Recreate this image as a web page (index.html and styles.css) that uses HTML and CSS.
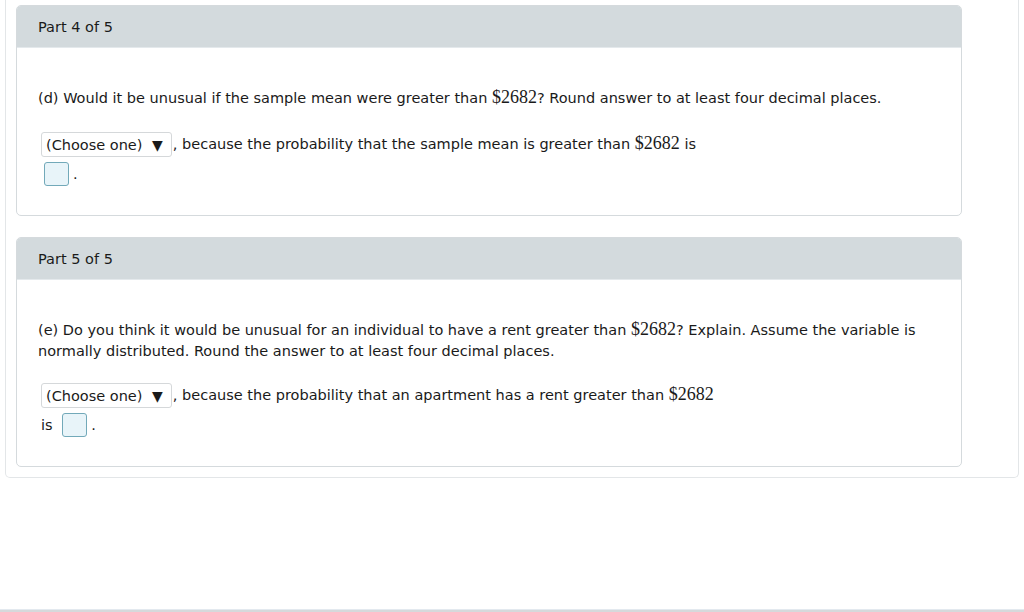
FILE: index.html
```html
<!DOCTYPE html>
<html>
<head>
<meta charset="utf-8">
<link rel="stylesheet" href="styles.css">
</head>
<body>
<div class="outer">
  <div class="card">
    <div class="card-head">Part 4 of 5</div>
    <div class="card-body">
      <p class="question">(d) Would it be unusual if the sample mean were greater than <span class="num">$2682</span>? Round answer to at least four decimal places.</p>
      <div class="answer">
        <span class="select">(Choose one) <span class="arrow">▼</span></span><span class="after">, because the probability that the sample mean is greater than <span class="num">$2682</span> is</span>
      </div>
      <div class="answer-line"><span class="box first"></span>.</div>
    </div>
  </div>
  <div class="card">
    <div class="card-head">Part 5 of 5</div>
    <div class="card-body">
      <p class="question">(e) Do you think it would be unusual for an individual to have a rent greater than <span class="num">$2682</span>? Explain. Assume the variable is normally distributed. Round the answer to at least four decimal places.</p>
      <div class="answer answer-tight">
        <span class="select">(Choose one) <span class="arrow">▼</span></span><span class="after">, because the probability that an apartment has a rent greater than <span class="num">$2682</span></span>
      </div>
      <div class="answer-line is-line">is <span class="box"></span>.</div>
    </div>
  </div>
</div>
<div class="footer-line"></div>
</body>
</html>
```
FILE: styles.css
```css
html, body {
  margin: 0;
  padding: 0;
  background: #fff;
}
body {
  font-family: "DejaVu Sans", Verdana, sans-serif;
  font-size: 14.5px;
  color: #1a1a1a;
}
.outer {
  margin-left: 5px;
  width: 1014px;
  border: 1px solid #e3e6e8;
  border-top: 0;
  border-radius: 0 0 5px 5px;
  padding: 5px 56px 10px 10px;
  box-sizing: border-box;
}
.card {
  border: 1px solid #d5dadd;
  border-radius: 5px;
  overflow: hidden;
  margin-bottom: 21px;
  background: #fff;
}
.card:last-child {
  margin-bottom: 0;
}
.card-head {
  background: #d3dadd;
  height: 41px;
  line-height: 43px;
  padding-left: 21px;
  border-bottom: 1px solid #e4e9ec;
}
.card-body {
  padding: 40px 21px 29px 21px;
}
.question {
  margin: 0;
  line-height: 21px;
}
.num {
  font-family: "Liberation Serif", "Times New Roman", serif;
  font-size: 18px;
  line-height: 1;
}
.answer {
  margin-top: 23px;
  height: 25px;
  line-height: 25px;
  padding-left: 3px;
}
.answer-tight {
  margin-top: 21px;
}
.select {
  display: inline-block;
  box-sizing: border-box;
  height: 25px;
  line-height: 24px;
  padding: 0 8px 0 4px;
  border: 1px solid #d5d8da;
  border-radius: 3px;
  vertical-align: top;
}
.arrow {
  display: inline-block;
  margin-left: 5px;
  font-size: 14px;
}
.after {
  padding-left: 1px;
  vertical-align: top;
}
.answer-line {
  margin-top: 5px;
  padding-left: 6px;
  height: 24px;
  line-height: 24px;
}
.box {
  display: inline-block;
  box-sizing: border-box;
  width: 25px;
  height: 24px;
  border: 1px solid #72a9b9;
  background: #e8f4f9;
  border-radius: 3px;
  vertical-align: top;
  margin-right: 4px;
}
.is-line {
  padding-left: 3px;
}
.is-line .box {
  margin-left: 5px;
}
.footer-line {
  position: fixed;
  left: 0;
  right: 0;
  bottom: 0;
  height: 2px;
  border-top: 1px solid #e3e9ef;
  background: #d6d9db;
}
```
